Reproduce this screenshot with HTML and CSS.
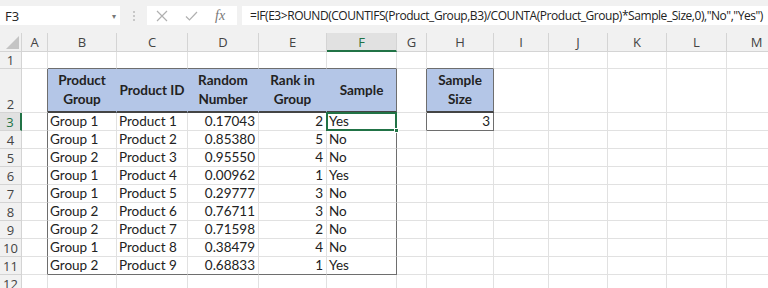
FILE: index.html
```html
<!DOCTYPE html>
<html lang="en">
<head>
  <meta charset="UTF-8">
  <title>Sample selection</title>
  <link rel="stylesheet" href="styles.css">
</head>
<body>
  <div class="formula-bar">
    <div class="name-box"><span>F3</span><span class="caret">&#9662;</span></div>
    <div class="grip"><i></i><i></i><i></i></div>
    <div class="fx-box">
      <svg width="12" height="12" viewBox="0 0 12 12"><path d="M1 1 L11 11 M11 1 L1 11" stroke="#b0b0b0" stroke-width="1.2" fill="none"/></svg>
      <svg width="13" height="12" viewBox="0 0 13 12"><path d="M1 6.5 L4.5 10 L12 2" stroke="#b0b0b0" stroke-width="1.2" fill="none"/></svg>
      <span class="fx">fx</span>
    </div>
    <div class="formula">=IF(E3&gt;ROUND(COUNTIFS(Product_Group,B3)/COUNTA(Product_Group)*Sample_Size,0),"No","Yes")</div>
  </div>

  <div class="sheet">
    <!-- column headers -->
    <div class="ch corner"><svg width="13" height="13" viewBox="0 0 13 13"><path d="M13 0 L13 13 L0 13 Z" fill="#c4c4c4"/></svg></div>
    <div class="ch">A</div><div class="ch">B</div><div class="ch">C</div><div class="ch">D</div><div class="ch">E</div>
    <div class="ch on">F</div><div class="ch">G</div><div class="ch">H</div><div class="ch">I</div><div class="ch">J</div>
    <div class="ch">K</div><div class="ch">L</div><div class="ch">M</div>

    <!-- row 1 -->
    <div class="rh">1</div>
    <div></div><div class="eb"></div><div class="eb"></div><div class="eb"></div><div class="eb"></div><div class="eb"></div>
    <div></div><div class="eb"></div><div></div><div></div><div></div><div></div><div></div>

    <!-- row 2 -->
    <div class="rh">2</div>
    <div class="er"></div>
    <div class="th">Product<br>Group</div>
    <div class="th">Product ID</div>
    <div class="th">Random<br>Number</div>
    <div class="th">Rank in<br>Group</div>
    <div class="th last">Sample</div>
    <div class="er"></div>
    <div class="th last">Sample<br>Size</div>
    <div></div><div></div><div></div><div></div><div></div>

    <!-- row 3 -->
    <div class="rh on">3</div>
    <div class="er"></div><div>Group 1</div><div>Product 1</div><div class="num">0.17043</div><div class="num">2</div>
    <div class="er sel">Yes</div><div class="er"></div><div class="num er eb">3</div>
    <div></div><div></div><div></div><div></div><div></div>

    <!-- row 4 -->
    <div class="rh">4</div>
    <div class="er"></div><div>Group 1</div><div>Product 2</div><div class="num">0.85380</div><div class="num">5</div>
    <div class="er">No</div><div></div><div></div>
    <div></div><div></div><div></div><div></div><div></div>

    <!-- row 5 -->
    <div class="rh">5</div>
    <div class="er"></div><div>Group 2</div><div>Product 3</div><div class="num">0.95550</div><div class="num">4</div>
    <div class="er">No</div><div></div><div></div>
    <div></div><div></div><div></div><div></div><div></div>

    <!-- row 6 -->
    <div class="rh">6</div>
    <div class="er"></div><div>Group 1</div><div>Product 4</div><div class="num">0.00962</div><div class="num">1</div>
    <div class="er">Yes</div><div></div><div></div>
    <div></div><div></div><div></div><div></div><div></div>

    <!-- row 7 -->
    <div class="rh">7</div>
    <div class="er"></div><div>Group 1</div><div>Product 5</div><div class="num">0.29777</div><div class="num">3</div>
    <div class="er">No</div><div></div><div></div>
    <div></div><div></div><div></div><div></div><div></div>

    <!-- row 8 -->
    <div class="rh">8</div>
    <div class="er"></div><div>Group 2</div><div>Product 6</div><div class="num">0.76711</div><div class="num">3</div>
    <div class="er">No</div><div></div><div></div>
    <div></div><div></div><div></div><div></div><div></div>

    <!-- row 9 -->
    <div class="rh">9</div>
    <div class="er"></div><div>Group 2</div><div>Product 7</div><div class="num">0.71598</div><div class="num">2</div>
    <div class="er">No</div><div></div><div></div>
    <div></div><div></div><div></div><div></div><div></div>

    <!-- row 10 -->
    <div class="rh">10</div>
    <div class="er"></div><div>Group 1</div><div>Product 8</div><div class="num">0.38479</div><div class="num">4</div>
    <div class="er">No</div><div></div><div></div>
    <div></div><div></div><div></div><div></div><div></div>

    <!-- row 11 -->
    <div class="rh">11</div>
    <div class="er"></div><div class="eb">Group 2</div><div class="eb">Product 9</div><div class="num eb">0.68833</div><div class="num eb">1</div>
    <div class="er eb">Yes</div><div></div><div></div>
    <div></div><div></div><div></div><div></div><div></div>

    <!-- row 12 -->
    <div class="rh">12</div>
    <div></div><div></div><div></div><div></div><div></div><div></div>
    <div></div><div></div><div></div><div></div><div></div><div></div><div></div>
  </div>
</body>
</html>
```

FILE: styles.css
```css
body {
  margin: 0;
  overflow: hidden;
  background: #fff;
  font-family: Lato, "Liberation Sans", sans-serif;
}

/* formula bar */
.formula-bar {
  display: flex;
  align-items: center;
  height: 33px;
  padding-bottom: 2px;
  box-sizing: border-box;
  background: #f1f1f1;
  font-family: "Open Sans", "Liberation Sans", sans-serif;
  font-size: 13px;
  color: #222;
}
.name-box {
  display: flex;
  align-items: center;
  justify-content: space-between;
  width: 120px;
  height: 19px;
  padding: 0 4px 0 5px;
  box-sizing: border-box;
  background: #fff;
}
.caret {
  font-size: 8px;
  color: #777;
}
.grip {
  display: flex;
  flex-direction: column;
  gap: 2px;
  width: 2px;
  margin: 0 12px 0 13px;
}
.grip i {
  width: 2px;
  height: 2px;
  background: #c8c8c8;
}
.fx-box {
  display: flex;
  align-items: center;
  gap: 17px;
  width: 90px;
  height: 19px;
  padding-left: 9px;
  box-sizing: border-box;
  background: #fff;
}
.fx {
  font-family: "Liberation Serif", serif;
  font-style: italic;
  font-size: 14px;
  color: #777;
}
.formula {
  flex: 1;
  height: 19px;
  margin-left: 5px;
  padding-left: 8px;
  background: #fff;
  font-size: 12px;
  letter-spacing: -0.45px;
  line-height: 19px;
  white-space: nowrap;
  overflow: hidden;
}

/* worksheet grid */
.sheet {
  display: grid;
  width: max-content;
  grid-template-columns: 22px 26px 69px 71px 71px 68px 70px 30px 67px 55px 59px 59px 60px 60px;
  grid-template-rows: 19px 17px 44px repeat(9, 18px) 18px;
}
.sheet > div {
  box-sizing: border-box;
  border-right: 1px solid #e1e1e1;
  border-bottom: 1px solid #e1e1e1;
  padding: 0 2px;
  font-size: 13.5px;
  line-height: 17px;
  color: #222;
  white-space: nowrap;
  overflow: hidden;
}
.sheet > .ch {
  background: #f1f1f1;
  border-color: #d4d4d4;
  text-align: center;
  line-height: 19px;
  font-family: "Open Sans", "Liberation Sans", sans-serif;
  font-size: 13px;
  color: #444;
}
.sheet > .corner {
  display: flex;
  align-items: flex-end;
  justify-content: flex-end;
  padding: 0 2px 2px 0;
}
.sheet > .ch.on {
  background: #e1e1e1;
  color: #217346;
  border-bottom: 2px solid #217346;
}
.sheet > .rh {
  display: flex;
  align-items: flex-end;
  justify-content: center;
  padding: 0;
  background: #f1f1f1;
  border-color: #d4d4d4;
  font-family: "Open Sans", "Liberation Sans", sans-serif;
  font-size: 13px;
  line-height: 16px;
  color: #444;
}
.sheet > .rh.on {
  background: #e1e1e1;
  color: #217346;
  border-right: 2px solid #217346;
}
.sheet > .th {
  display: flex;
  align-items: center;
  justify-content: center;
  text-align: center;
  background: #b4c6e7;
  border-right-color: #b4c6e7;
  border-bottom: 2px solid #444;
  font-weight: bold;
  line-height: 19px;
}
.sheet > .th.last {
  border-right-color: #6e6e6e;
}
.sheet > .num {
  text-align: right;
  padding-right: 3px;
}
.sheet > .er {
  border-right-color: #6e6e6e;
}
.sheet > .eb {
  border-bottom-color: #6e6e6e;
}

/* active cell */
.sheet > .sel {
  position: relative;
  overflow: visible;
}
.sel::after {
  content: "";
  position: absolute;
  left: -1px;
  top: -1px;
  right: -1px;
  bottom: -1px;
  border: 2px solid #217346;
}
.sel::before {
  content: "";
  position: absolute;
  right: -3px;
  bottom: -3px;
  width: 5px;
  height: 5px;
  background: #217346;
  border: 1px solid #fff;
  box-sizing: border-box;
  z-index: 1;
}
```
